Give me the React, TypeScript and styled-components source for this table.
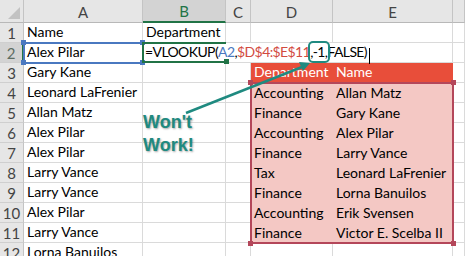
import styled, { createGlobalStyle } from 'styled-components';

const GRID = '#dadada';
const HEAD_BG = '#e6e6e6';
const HEAD_ACTIVE = '#d3d3d3';
const EXCEL_GREEN = '#217346';
const REF_BLUE = '#4a78c0';
const REF_RED = '#d24b3f';
const TEAL = '#1f8a80';

const GlobalStyle = createGlobalStyle`
  *, *::before, *::after { box-sizing: border-box; }
  html, body { margin: 0; padding: 0; background: #fff; overflow: hidden; }
`;

const Sheet = styled.div`
  position: relative;
  display: grid;
  grid-template-columns: 24px 119px 83px 25px 82px 120px 12px;
  grid-template-rows: 23px repeat(12, 20px);
  width: 465px;
  height: 256px;
  overflow: hidden;
  font-family: Lato, 'Liberation Sans', sans-serif;
  font-size: 14px;
  color: #000;
`;

const Corner = styled.div`
  position: relative;
  background: ${HEAD_BG};
  border-right: 1px solid #c4c4c4;
  border-bottom: 1px solid #b8b8b8;

  &::after {
    content: '';
    position: absolute;
    right: 3px;
    bottom: 3px;
    width: 12px;
    height: 12px;
    background: #c2c2c2;
    clip-path: polygon(100% 0, 100% 100%, 0 100%);
  }
`;

const ColHead = styled.div<{ $active?: boolean }>`
  display: flex;
  align-items: center;
  justify-content: center;
  padding-top: 1px;
  background: ${(p) => (p.$active ? HEAD_ACTIVE : HEAD_BG)};
  color: ${(p) => (p.$active ? EXCEL_GREEN : '#444')};
  border-right: 1px solid #c4c4c4;
  border-bottom: ${(p) => (p.$active ? `2px solid ${EXCEL_GREEN}` : '1px solid #b8b8b8')};
  font-size: 15px;
`;

const RowHead = styled.div<{ $active?: boolean }>`
  display: flex;
  align-items: center;
  justify-content: center;
  padding-top: 1px;
  background: ${(p) => (p.$active ? HEAD_ACTIVE : HEAD_BG)};
  color: ${(p) => (p.$active ? '#5d6d63' : '#444')};
  border-right: ${(p) => (p.$active ? `2px solid ${EXCEL_GREEN}` : '1px solid #c4c4c4')};
  border-bottom: 1px solid #cfcfcf;
  font-size: 15px;
`;

const Cell = styled.div`
  position: relative;
  display: flex;
  align-items: flex-end;
  padding: 0 3px 1px 3px;
  border-right: 1px solid ${GRID};
  border-bottom: 1px solid ${GRID};
  white-space: nowrap;
  line-height: 18px;
`;

const RangeCell = styled(Cell)`
  z-index: 2;
  outline: 2px solid ${REF_BLUE};
  outline-offset: -1px;
`;

const Handle = styled.span<{ $color: string; $right?: boolean; $bottom?: boolean }>`
  position: absolute;
  width: 5px;
  height: 5px;
  background: ${(p) => p.$color};
  ${(p) => (p.$right ? 'right: -3px;' : 'left: -3px;')}
  ${(p) => (p.$bottom ? 'bottom: -3px;' : 'top: -3px;')}
`;

const FormulaCell = styled(Cell)`
  grid-column: 3 / 7;
  grid-row: 3;
  z-index: 3;
  padding-left: 2px;
  letter-spacing: -0.6px;
`;

/* green frame of the cell being edited (column B only) */
const ActiveFrame = styled.span`
  position: absolute;
  left: -1px;
  top: -1px;
  width: 84px;
  height: 21px;
  border-top: 2px solid ${EXCEL_GREEN};
  border-bottom: 2px solid ${EXCEL_GREEN};
  border-left: 2px solid ${EXCEL_GREEN};
  pointer-events: none;
`;

const Ref = styled.span<{ $color: string }>`
  color: ${(p) => p.$color};
`;

const Callout = styled.span`
  position: relative;

  &::after {
    content: '';
    position: absolute;
    left: -2px;
    right: -3px;
    top: -2px;
    bottom: -2px;
    border: 2px solid ${TEAL};
    border-radius: 5px;
  }
`;

const Caret = styled.span`
  display: inline-block;
  width: 1px;
  height: 16px;
  margin-left: 2px;
  margin-bottom: -3px;
  background: #000;
`;

const TableHead = styled.div`
  grid-column: 5 / 7;
  grid-row: 4;
  display: grid;
  grid-template-columns: 82px 120px;
  background: #e84e3a;
  color: #fff;
  border-bottom: 1px solid #e84e3a;
`;

const TableBody = styled.div`
  grid-column: 5 / 7;
  grid-row: 5 / 13;
  position: relative;
  z-index: 2;
  display: grid;
  grid-template-columns: 82px 120px;
  grid-auto-rows: 20px;
  background: #f4c8c4;
  outline: 2px solid #b4475a;
  outline-offset: -1px;
`;

const TableCell = styled.div`
  display: flex;
  align-items: flex-end;
  padding: 0 3px 1px 3px;
  white-space: nowrap;
  line-height: 18px;
`;

const Note = styled.div`
  position: absolute;
  left: 143px;
  top: 111px;
  z-index: 5;
  font-family: 'Liberation Sans', Arial, sans-serif;
  font-weight: bold;
  font-size: 18px;
  line-height: 23px;
  color: ${TEAL};
  text-shadow: 1px 1px 2px rgba(0, 0, 0, 0.35);
`;

const Pointer = styled.svg`
  position: absolute;
  left: 0;
  top: 0;
  z-index: 5;
  pointer-events: none;
`;

const names = [
  'Name',
  'Alex Pilar',
  'Gary Kane',
  'Leonard LaFrenier',
  'Allan Matz',
  'Alex Pilar',
  'Alex Pilar',
  'Larry Vance',
  'Larry Vance',
  'Alex Pilar',
  'Larry Vance',
  'Lorna Banuilos',
];

const lookup = [
  ['Accounting', 'Allan Matz'],
  ['Finance', 'Gary Kane'],
  ['Accounting', 'Alex Pilar'],
  ['Finance', 'Larry Vance'],
  ['Tax', 'Leonard LaFrenier'],
  ['Finance', 'Lorna Banuilos'],
  ['Accounting', 'Erik Svensen'],
  ['Finance', 'Victor E. Scelba II'],
];

const columns = ['A', 'B', 'C', 'D', 'E', ''];

const App = () => {
  const rows = names.map((name, i) => {
    const r = i + 1;
    const at = (col: number) => ({ gridRow: r + 1, gridColumn: col });
    const inTable = r >= 3 && r <= 11;

    if (r === 2) {
      return [
        <RowHead key={`h${r}`} $active style={at(1)}>{r}</RowHead>,
        <RangeCell key={`a${r}`} style={at(2)}>
          {name}
          <Handle $color={REF_BLUE} />
          <Handle $color={REF_BLUE} $right />
          <Handle $color={REF_BLUE} $bottom />
          <Handle $color={REF_BLUE} $right $bottom />
        </RangeCell>,
        <FormulaCell key={`b${r}`}>
          <ActiveFrame>
            <Handle $color={EXCEL_GREEN} $right $bottom />
          </ActiveFrame>
          =VLOOKUP(<Ref $color={REF_BLUE}>A2</Ref>,<Ref $color={REF_RED}>$D$4:$E$11</Ref>
          <Callout>,-1,</Callout>FALSE)
          <Caret />
        </FormulaCell>,
        <Cell key={`f${r}`} style={at(7)} />,
      ];
    }

    return [
      <RowHead key={`h${r}`} style={at(1)}>{r}</RowHead>,
      <Cell key={`a${r}`} style={at(2)}>{name}</Cell>,
      <Cell key={`b${r}`} style={at(3)}>{r === 1 ? 'Department' : ''}</Cell>,
      <Cell key={`c${r}`} style={at(4)} />,
      ...(inTable
        ? []
        : [<Cell key={`d${r}`} style={at(5)} />, <Cell key={`e${r}`} style={at(6)} />]),
      <Cell key={`f${r}`} style={at(7)} />,
    ];
  });

  return (
    <>
      <GlobalStyle />
      <Sheet>
        <Corner />
        {columns.map((c) => (
          <ColHead key={c || 'F'} $active={c === 'B'}>
            {c}
          </ColHead>
        ))}
        {rows}
        <TableHead>
          <TableCell>Department</TableCell>
          <TableCell>Name</TableCell>
        </TableHead>
        <TableBody>
          <Handle $color="#b4475a" />
          <Handle $color="#b4475a" $right />
          <Handle $color="#b4475a" $bottom />
          <Handle $color="#b4475a" $right $bottom />
          {lookup.map(([dept, person], i) => [
            <TableCell key={`d${i}`}>{dept}</TableCell>,
            <TableCell key={`e${i}`}>{person}</TableCell>,
          ])}
        </TableBody>
        <Note>
          Won't
          <br />
          Work!
        </Note>
        <Pointer width={465} height={256} viewBox="0 0 465 256">
          <line x1={186} y1={113} x2={302} y2={67} stroke={TEAL} strokeWidth={2.5} />
          <polygon points="310,63 299,62 303,71" fill={TEAL} />
        </Pointer>
      </Sheet>
    </>
  );
};

export default App;
